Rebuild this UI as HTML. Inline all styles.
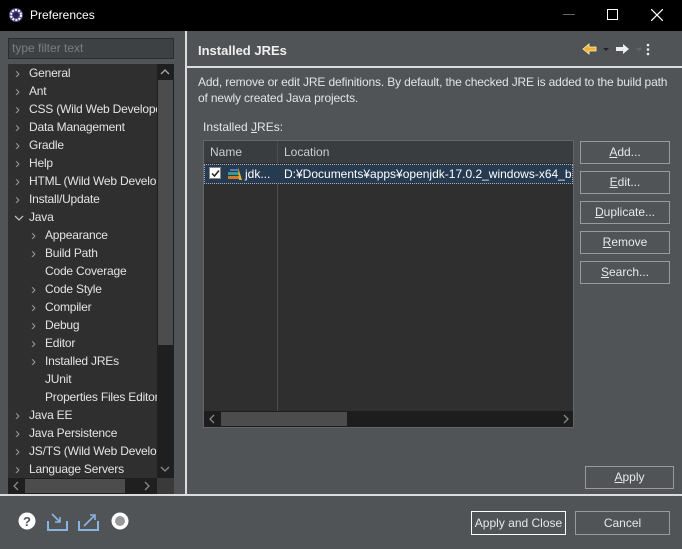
<!DOCTYPE html>
<html><head><meta charset="utf-8"><style>
*{margin:0;padding:0;box-sizing:border-box}
body{width:682px;height:549px;background:#505457;font-family:"Liberation Sans","Noto Sans CJK JP",sans-serif;font-size:12px;color:#e0e0e0;position:relative;overflow:hidden}
.a{position:absolute;white-space:nowrap}
.title{left:0;top:0;width:682px;height:31px;background:#000}
.btn{position:absolute;border:1px solid #9a9a9a;color:#e8e8e8;text-align:center;line-height:20px;height:23px}
.tree div{position:absolute;white-space:nowrap;color:#e4e4e4;letter-spacing:-0.2px}
.tree div.c{color:#9a9a9a;font-size:15px;line-height:14px;letter-spacing:0}
u{text-decoration:underline}
</style></head><body>
<div class="a title"></div>
<svg class="a" style="left:8px;top:7px" width="16" height="16" viewBox="0 0 16 16"><circle cx="8" cy="8" r="7" fill="#5a4a8a"/><circle cx="8" cy="8" r="5" fill="none" stroke="#fff" stroke-width="2" stroke-dasharray="2 1.2"/><circle cx="8" cy="8" r="3" fill="#2c2250"/></svg>
<div class="a" style="left:30px;top:8px;color:#fff;font-size:12px">Preferences</div>
<div class="a" style="left:563px;top:14px;width:12px;height:1px;background:#666"></div>
<div class="a" style="left:607px;top:9px;width:11px;height:11px;border:1px solid #fff"></div>
<svg class="a" style="left:651px;top:9px" width="12" height="12"><path d="M0 0L12 12M12 0L0 12" stroke="#fff" stroke-width="1.2"/></svg>

<div class="a" style="left:8px;top:38px;width:166px;height:21px;background:#3e4144;border:1px solid #2a2c2e;color:#7c7f82;padding:2px 3px">type filter text</div>
<div class="a" style="left:8px;top:64px;width:166px;height:430px;background:#2f2f2f"></div>
<div class="a" style="left:157px;top:64px;width:17px;height:414px;background:#1f1f1f"></div>
<div class="a" style="left:158px;top:80px;width:15px;height:265px;background:#4c4c4c"></div>
<div class="a" style="left:8px;top:478px;width:166px;height:16px;background:#1f1f1f"></div>
<div class="a" style="left:25px;top:479px;width:100px;height:14px;background:#4c4c4c"></div>
<div class="a" style="left:157px;top:478px;width:17px;height:16px;background:#3a3a3a"></div>
<svg class="a" style="left:160px;top:68px" width="10" height="8"><path d="M1 6L5 2L9 6" stroke="#aaa" stroke-width="1.3" fill="none"/></svg>
<svg class="a" style="left:160px;top:465px" width="10" height="8"><path d="M1 2L5 6L9 2" stroke="#888" stroke-width="1.3" fill="none"/></svg>
<svg class="a" style="left:12px;top:481px" width="8" height="10"><path d="M6 1L2 5L6 9" stroke="#888" stroke-width="1.3" fill="none"/></svg>
<svg class="a" style="left:143px;top:481px" width="8" height="10"><path d="M2 1L6 5L2 9" stroke="#888" stroke-width="1.3" fill="none"/></svg>

<div class="tree" style="position:absolute;left:0;top:0;width:157px;height:478px;overflow:hidden">
<div class="c" style="left:15px;top:67px">›</div><div style="left:29px;top:66px">General</div>
<div class="c" style="left:15px;top:85px">›</div><div style="left:29px;top:84px">Ant</div>
<div class="c" style="left:15px;top:103px">›</div><div style="left:29px;top:102px">CSS (Wild Web Develope</div>
<div class="c" style="left:15px;top:121px">›</div><div style="left:29px;top:120px">Data Management</div>
<div class="c" style="left:15px;top:139px">›</div><div style="left:29px;top:138px">Gradle</div>
<div class="c" style="left:15px;top:157px">›</div><div style="left:29px;top:156px">Help</div>
<div class="c" style="left:15px;top:175px">›</div><div style="left:29px;top:174px">HTML (Wild Web Develo</div>
<div class="c" style="left:15px;top:193px">›</div><div style="left:29px;top:192px">Install/Update</div>
<svg style="position:absolute;left:14px;top:214px" width="10" height="8"><path d="M1 2L5 6L9 2" stroke="#bbb" stroke-width="1.3" fill="none"/></svg><div style="left:29px;top:210px">Java</div>
<div class="c" style="left:31px;top:229px">›</div><div style="left:45px;top:228px">Appearance</div>
<div class="c" style="left:31px;top:247px">›</div><div style="left:45px;top:246px">Build Path</div>
<div style="left:45px;top:264px">Code Coverage</div>
<div class="c" style="left:31px;top:283px">›</div><div style="left:45px;top:282px">Code Style</div>
<div class="c" style="left:31px;top:301px">›</div><div style="left:45px;top:300px">Compiler</div>
<div class="c" style="left:31px;top:319px">›</div><div style="left:45px;top:318px">Debug</div>
<div class="c" style="left:31px;top:337px">›</div><div style="left:45px;top:336px">Editor</div>
<div class="c" style="left:31px;top:355px">›</div><div style="left:45px;top:354px">Installed JREs</div>
<div style="left:45px;top:372px">JUnit</div>
<div style="left:45px;top:390px">Properties Files Editor</div>
<div class="c" style="left:15px;top:409px">›</div><div style="left:29px;top:408px">Java EE</div>
<div class="c" style="left:15px;top:427px">›</div><div style="left:29px;top:426px">Java Persistence</div>
<div class="c" style="left:15px;top:445px">›</div><div style="left:29px;top:444px">JS/TS (Wild Web Develop</div>
<div class="c" style="left:15px;top:463px">›</div><div style="left:29px;top:462px">Language Servers</div>
</div>

<div class="a" style="left:185px;top:31px;width:2px;height:464px;background:#dcdcdc"></div>
<div class="a" style="left:198px;top:43px;font-weight:bold;font-size:13px;color:#f0f0f0">Installed JREs</div>
<svg class="a" style="left:582px;top:42px" width="70" height="14"><path d="M1 7L7 2V5H14V9H7V12Z" fill="#f0b030" stroke="#fff3c0" stroke-width=".8"/><path d="M21 6h6l-3 3z" fill="#222"/><path d="M34 5H41V2L47 7L41 12V9H34Z" fill="#eee"/><path d="M54 6h6l-3 3z" fill="#666"/><circle cx="66" cy="3" r="1.3" fill="#eee"/><circle cx="66" cy="7.5" r="1.3" fill="#eee"/><circle cx="66" cy="12" r="1.3" fill="#eee"/></svg>
<div class="a" style="left:187px;top:66px;width:495px;height:2px;background:#dcdcdc"></div>
<div class="a" style="left:198px;top:74px;line-height:16px;color:#e4e4e4;letter-spacing:-0.15px">Add, remove or edit JRE definitions. By default, the checked JRE is added to the build path<br>of newly created Java projects.</div>
<div class="a" style="left:203px;top:120px;color:#e4e4e4">Installed <u>J</u>REs:</div>

<div class="a" style="left:203px;top:140px;width:371px;height:288px;background:#2f2f2f;border:1px solid #666"></div>
<div class="a" style="left:204px;top:141px;width:369px;height:22px;background:#3a3d40"></div>
<div class="a" style="left:277px;top:141px;width:1px;height:270px;background:#4a4d50"></div>
<div class="a" style="left:210px;top:145px;color:#ccc">Name</div>
<div class="a" style="left:284px;top:145px;color:#ccc">Location</div>
<div class="a" style="left:204px;top:164px;width:369px;height:20px;background:#263a50;border:1px dotted #aab"></div>
<div class="a" style="left:209px;top:167px;width:12px;height:12px;background:#fff;border:1px solid #888"></div>
<svg class="a" style="left:210px;top:168px" width="11" height="11"><path d="M2 5.5L4.5 8L9 2.5" stroke="#222" stroke-width="1.5" fill="none"/></svg>
<svg class="a" style="left:227px;top:166px" width="16" height="15"><rect x="1" y="10" width="11" height="3" fill="#d07a30"/><rect x="1" y="6" width="11" height="3" fill="#3a9a8a"/><rect x="3" y="3" width="8" height="2" fill="#4a7ac0"/><path d="M11 1L15 14H12Z" fill="#e0b030"/></svg>
<div class="a" style="left:245px;top:167px;color:#fff">jdk...</div>
<div class="a" style="left:284px;top:167px;color:#fff;width:288px;overflow:hidden">D:¥Documents¥apps¥openjdk-17.0.2_windows-x64_bin</div>
<div class="a" style="left:204px;top:411px;width:369px;height:16px;background:#1d1d1d"></div>
<div class="a" style="left:221px;top:412px;width:126px;height:14px;background:#4c4c4c"></div>
<svg class="a" style="left:208px;top:414px" width="8" height="10"><path d="M6 1L2 5L6 9" stroke="#888" stroke-width="1.3" fill="none"/></svg>
<svg class="a" style="left:562px;top:414px" width="8" height="10"><path d="M2 1L6 5L2 9" stroke="#888" stroke-width="1.3" fill="none"/></svg>

<div class="btn" style="left:580px;top:141px;width:90px"><u>A</u>dd...</div>
<div class="btn" style="left:580px;top:171px;width:90px"><u>E</u>dit...</div>
<div class="btn" style="left:580px;top:201px;width:90px"><u>D</u>uplicate...</div>
<div class="btn" style="left:580px;top:231px;width:90px"><u>R</u>emove</div>
<div class="btn" style="left:580px;top:261px;width:90px"><u>S</u>earch...</div>
<div class="btn" style="left:585px;top:466px;width:89px"><u>A</u>pply</div>

<div class="a" style="left:0;top:494px;width:682px;height:2px;background:#dcdcdc"></div>
<svg class="a" style="left:17px;top:511px" width="115" height="22"><circle cx="10" cy="10" r="8.5" fill="#fff"/><text x="10" y="15" text-anchor="middle" font-size="13" font-weight="bold" fill="#505457" font-family="Liberation Sans">?</text><path d="M31 10V19H50V10" stroke="#8ab4e0" stroke-width="2" fill="none"/><path d="M35 3L43 11M43 6V11H38" stroke="#8ab4e0" stroke-width="1.6" fill="none"/><path d="M62 10V19H81V10" stroke="#8ab4e0" stroke-width="2" fill="none"/><path d="M67 15L78 4M73 4H78V9" stroke="#8ab4e0" stroke-width="1.6" fill="none"/><circle cx="103" cy="10" r="8.5" fill="#fff"/><circle cx="103" cy="10" r="5" fill="#999"/></svg>
<div class="btn" style="left:471px;top:511px;width:95px;height:24px;border-color:#fff;line-height:22px">Apply and Close</div>
<div class="btn" style="left:575px;top:511px;width:95px;height:24px;line-height:22px">Cancel</div>
</body></html>
